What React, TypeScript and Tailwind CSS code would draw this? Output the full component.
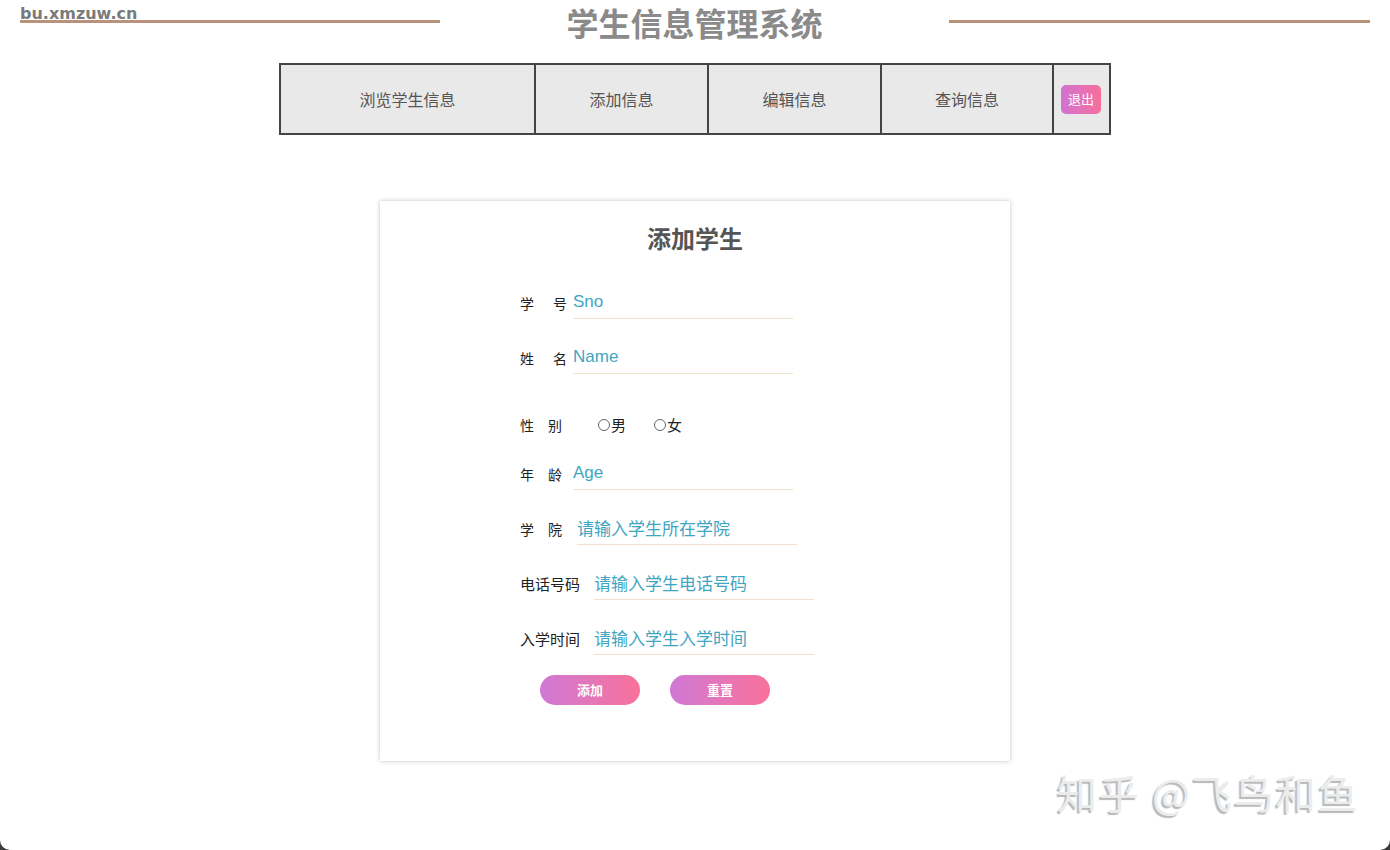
import React from "react";

const cn = '"Noto Sans CJK SC", "Liberation Sans", sans-serif';
const lat = '"Liberation Sans", "Noto Sans CJK SC", sans-serif';

function Label({ chars, gap, size = "text-[14px]" }: { chars: string[]; gap: string; size?: string }) {
  return (
    <div className={`flex ${gap} ${size} text-[#222] leading-5`}>
      {chars.map((c, i) => (
        <span key={i}>{c}</span>
      ))}
    </div>
  );
}

function Field({ label, placeholder, ml, latin }: { label: React.ReactNode; placeholder: string; ml: string; latin?: boolean }) {
  return (
    <div className="flex items-center h-[33px]">
      {label}
      <div
        className={`${ml} w-[220px] h-[33px] border-b border-[#efe3cc] flex items-center text-[17px] text-[#3fa6c2]`}
        style={{ fontFamily: latin ? lat : cn }}
      >
        {placeholder}
      </div>
    </div>
  );
}

function Radio({ text }: { text: string }) {
  return (
    <div className="flex items-center">
      <span className="w-[12px] h-[12px] rounded-full border border-[#666] inline-block" />
      <span className="text-[15px] text-[#222] ml-[1px]">{text}</span>
    </div>
  );
}

export default function App() {
  return (
    <div className="bg-[#3a3a3a] w-[1390px] h-[850px]" style={{ fontFamily: cn }}>
      <div className="relative bg-white w-full h-full rounded-bl-[10px] rounded-br-[10px] overflow-hidden">
        {/* Header */}
        <div className="relative h-[46px]">
          <div className="absolute left-[20px] top-[4px] text-[16px] font-bold text-[#7a7a7a] leading-5" style={{ fontFamily: '"DejaVu Sans", sans-serif' }}>
            bu.xmzuw.cn
          </div>
          <div className="flex items-center h-[46px]">
            <div className="ml-[20px] w-[420px] h-[3px] bg-[#b8937a] mt-[-4px]" />
            <div className="flex-1 text-center text-[32px] font-bold text-[#8a8a8a] leading-[40px] mt-[-3px]">学生信息管理系统</div>
            <div className="mr-[20px] w-[421px] h-[3px] bg-[#b8937a] mt-[-4px]" />
          </div>
        </div>

        {/* Nav */}
        <div className="mt-[17px] ml-[279px] w-[832px] h-[72px] border-2 border-[#444] bg-[#e9e9e9] flex text-[16px] text-[#555]">
          <div className="w-[255px] border-r-2 border-[#444] flex items-center justify-center">浏览学生信息</div>
          <div className="w-[173px] border-r-2 border-[#444] flex items-center justify-center">添加信息</div>
          <div className="w-[173px] border-r-2 border-[#444] flex items-center justify-center">编辑信息</div>
          <div className="w-[172px] border-r-2 border-[#444] flex items-center justify-center">查询信息</div>
          <div className="flex-1 flex items-center pl-[7px]">
            <div className="w-[40px] h-[29px] rounded-[5px] bg-gradient-to-r from-[#d272d0] to-[#f66e9c] text-white text-[13px] flex items-center justify-center">退出</div>
          </div>
        </div>

        {/* Card */}
        <div className="mt-[66px] ml-[380px] w-[630px] h-[560px] bg-white shadow-[0_0_4px_rgba(0,0,0,0.25)] pt-[21px]">
          <div className="text-center text-[24px] font-bold text-[#555] leading-8">添加学生</div>
          <div className="pl-[140px]">
            <div className="mt-[32px]">
              <Field label={<Label chars={["学", "号"]} gap="gap-[19px]" />} placeholder="Sno" ml="ml-[6px]" latin />
            </div>
            <div className="mt-[22px]">
              <Field label={<Label chars={["姓", "名"]} gap="gap-[19px]" />} placeholder="Name" ml="ml-[6px]" latin />
            </div>
            <div className="mt-[41px] h-[20px] flex items-center">
              <Label chars={["性", "别"]} gap="gap-[14px]" />
              <div className="ml-[36px]"><Radio text="男" /></div>
              <div className="ml-[28px]"><Radio text="女" /></div>
            </div>
            <div className="mt-[22px]">
              <Field label={<Label chars={["年", "龄"]} gap="gap-[14px]" />} placeholder="Age" ml="ml-[11px]" latin />
            </div>
            <div className="mt-[22px]">
              <Field label={<Label chars={["学", "院"]} gap="gap-[14px]" />} placeholder="请输入学生所在学院" ml="ml-[15px]" />
            </div>
            <div className="mt-[22px]">
              <Field label={<Label chars={["电话号码"]} gap="gap-0" size="text-[15px]" />} placeholder="请输入学生电话号码" ml="ml-[14px]" />
            </div>
            <div className="mt-[22px]">
              <Field label={<Label chars={["入学时间"]} gap="gap-0" size="text-[15px]" />} placeholder="请输入学生入学时间" ml="ml-[14px]" />
            </div>
            <div className="mt-[20px] flex ml-[20px] gap-[30px]">
              <div className="w-[100px] h-[30px] rounded-full bg-gradient-to-r from-[#cf78d4] to-[#f9719a] text-white text-[13px] font-bold flex items-center justify-center">添加</div>
              <div className="w-[100px] h-[30px] rounded-full bg-gradient-to-r from-[#cf78d4] to-[#f9719a] text-white text-[13px] font-bold flex items-center justify-center">重置</div>
            </div>
          </div>
        </div>

        {/* Watermark */}
        <div
          className="absolute left-[1057px] top-[767px] text-[40px] tracking-[2px] text-[#ececec] leading-[50px] whitespace-pre"
          style={{ textShadow: "-2px 2px 1px #b8b8b8" }}
        >
          知乎 @飞鸟和鱼
        </div>
      </div>
    </div>
  );
}
